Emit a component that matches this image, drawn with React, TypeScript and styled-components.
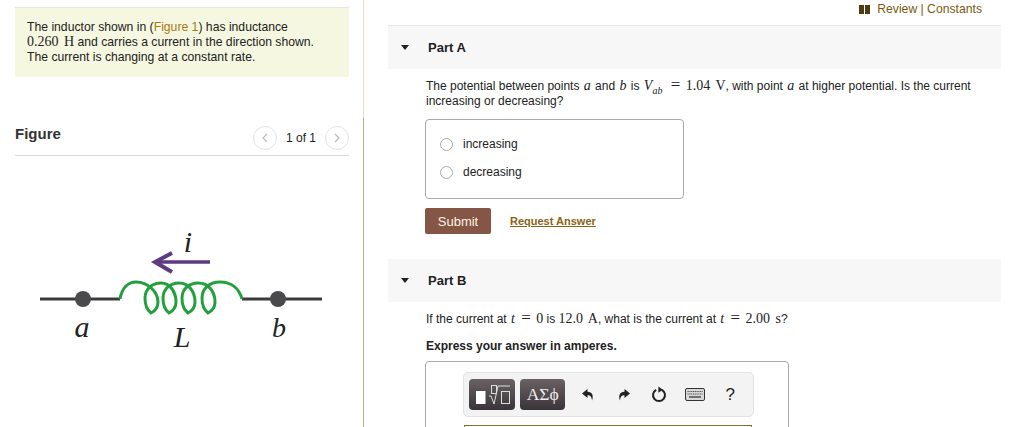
import React from 'react'
import styled, { createGlobalStyle } from 'styled-components'

const GlobalStyle = createGlobalStyle`
  html, body {
    margin: 0;
    padding: 0;
    background: #fff;
  }
  body {
    font-family: "Liberation Sans", Arial, sans-serif;
    color: #222;
    overflow: hidden;
  }
`

const Page = styled.div`
  display: flex;
  width: 1024px;
  height: 427px;
  overflow: hidden;
`

const LeftPane = styled.div`
  width: 364px;
  height: 427px;
  flex: none;
  box-sizing: border-box;
  padding: 7px 14px 0 15px;
  border-right: 1px solid #ecdccb;
  position: relative;
`

const PaneThumb = styled.div`
  position: absolute;
  top: 118px;
  right: -1px;
  bottom: 0;
  width: 1px;
  background: #c4a98a;
`

const Intro = styled.div`
  height: 70px;
  box-sizing: border-box;
  padding: 12px 0 0 12px;
  border-top: 1px solid #e6e6e0;
  background: #f6f7e0;
  font-size: 12.2px;
  line-height: 15px;
  white-space: nowrap;
`

const Accent = styled.span`
  color: #a47a14;
`

const Mathy = styled.span`
  font-family: "Liberation Serif", "Times New Roman", serif;
  font-size: 14px;
  line-height: 0;
  word-spacing: 2px;
`

const MathItalic = styled(Mathy)`
  font-style: italic;
  margin: 0 1px;
`

const Rel = styled(Mathy)`
  font-size: 17px;
  margin: 0 2px;
`

const FigureHead = styled.div`
  display: flex;
  align-items: center;
  justify-content: space-between;
  height: 27px;
  margin-top: 45px;
  padding-bottom: 6px;
  border-bottom: 1px solid #d9d9d9;
`

const FigureTitle = styled.div`
  font-size: 15px;
  font-weight: 700;
  color: #333;
  margin-bottom: 5px;
`

const Pager = styled.div`
  display: flex;
  align-items: center;
  gap: 9px;
  font-size: 12px;
  margin-top: 4px;
`

const PagerButton = styled.div`
  width: 24px;
  height: 24px;
  box-sizing: border-box;
  border: 1px solid #e4e4e4;
  border-radius: 50%;
  display: flex;
  align-items: center;
  justify-content: center;
`

const Diagram = styled.svg`
  display: block;
  width: 320px;
  height: 140px;
  margin: 64px 0 0 5px;
`

const RightPane = styled.div`
  flex: 1;
  min-width: 0;
  box-sizing: border-box;
  padding: 0 23px 0 24px;
`

const TopLinks = styled.div`
  height: 26px;
  box-sizing: border-box;
  padding: 3px 19px 0 0;
  display: flex;
  justify-content: flex-end;
  align-items: flex-start;
  gap: 7px;
  font-size: 12.2px;
  line-height: 13px;
  color: #7a5a10;
  border-bottom: 1px solid #e8e8e8;
`

const PartHeader = styled.div`
  height: 43px;
  display: flex;
  align-items: center;
  gap: 19px;
  padding-left: 13px;
  background: #f7f7f7;
  font-size: 13px;
  font-weight: 700;
  color: #222;
`

const Caret = styled.span`
  width: 0;
  height: 0;
  border-left: 4.5px solid transparent;
  border-right: 4.5px solid transparent;
  border-top: 5px solid #222;
`

const PartBody = styled.div`
  padding: 10px 0 0 37px;
`

const Question = styled.div`
  margin-left: 1px;
  font-size: 12px;
  line-height: 15px;
  white-space: nowrap;
`

const Sub = styled.sub`
  font-family: "Liberation Serif", "Times New Roman", serif;
  font-style: italic;
  font-size: 10px;
  line-height: 0;
  margin-right: 2px;
`

const ChoiceBox = styled.div`
  width: 259px;
  height: 80px;
  box-sizing: border-box;
  margin-top: 10px;
  padding: 10px 14px;
  border: 1px solid #a9a9a9;
  border-radius: 4px;
  display: flex;
  flex-direction: column;
`

const Choice = styled.label`
  display: flex;
  align-items: center;
  gap: 10px;
  height: 28px;
  font-size: 12px;
  color: #222;
`

const Radio = styled.span`
  width: 13px;
  height: 13px;
  box-sizing: border-box;
  border: 1px solid #aaa;
  border-radius: 50%;
`

const Actions = styled.div`
  display: flex;
  align-items: center;
  gap: 19px;
  margin-top: 9px;
`

const SubmitButton = styled.div`
  width: 66px;
  height: 26px;
  display: flex;
  align-items: center;
  justify-content: center;
  background: #855545;
  border-radius: 2px;
  color: #fbf3e3;
  font-size: 13px;
`

const RequestLink = styled.a`
  color: #8a6414;
  font-size: 11px;
  font-weight: 700;
  text-decoration: underline;
`

const PartSpacer = styled.div`
  height: 25px;
`

const Prompt = styled.div`
  margin: 12px 0 0 1px;
  font-size: 12px;
  font-weight: 700;
  line-height: 14px;
  color: #222;
`

const AnswerBox = styled.div`
  width: 364px;
  height: 80px;
  box-sizing: border-box;
  margin-top: 8px;
  padding: 10px 34px 0 37px;
  border: 1px solid #a9a9a9;
  border-radius: 4px;
`

const EditorBar = styled.div`
  height: 45px;
  box-sizing: border-box;
  padding: 0 5px;
  display: flex;
  align-items: center;
  background: #f3f3f3;
  border: 1px solid #e2e2e2;
  border-radius: 5px;
`

const ToolButton = styled.div`
  width: 46px;
  height: 31px;
  margin-right: 5px;
  border-radius: 4px;
  display: flex;
  align-items: center;
  justify-content: center;
  background: linear-gradient(#6a6163, #39343a);
  color: #f1eeee;
  font-family: "Liberation Serif", "Times New Roman", serif;
  font-size: 17.5px;
`

const IconSlot = styled.div`
  width: 36px;
  display: flex;
  justify-content: center;
  color: #222;
  font-size: 17px;
`

const InputEdge = styled.div`
  height: 8px;
  margin: 8px 2px 0 1px;
  border: 1px solid #8a6f33;
  border-bottom: 0;
`

const Chevron = ({ dir }: { dir: 'left' | 'right' }) => (
  <svg width="8" height="10" viewBox="0 0 8 10">
    <path d={dir === 'left' ? 'M6 1 2 5l4 4' : 'M2 1l4 4-4 4'} fill="none" stroke="#bbb" strokeWidth="1.2" />
  </svg>
)

const BookIcon = () => (
  <svg width="11" height="9" viewBox="0 0 11 9" style={{ marginTop: 2 }}>
    <path d="M0 0h5v9H0zM6 0h5v9H6z" fill="#4f3a12" />
  </svg>
)

const UndoIcon = ({ flip }: { flip?: boolean }) => (
  <svg width="14" height="14" viewBox="0 0 14 14" style={flip ? { transform: 'scaleX(-1)' } : undefined}>
    <path d="M6.5 1 1 5.6l5.5 4.4V7.2c2.6 0 4 1.2 4.6 5.3 1.6-4.8.3-8.6-4.6-8.7z" fill="#222" />
  </svg>
)

const ResetIcon = () => (
  <svg width="16" height="17" viewBox="0 0 16 17">
    <path d="M5.2 3.8A6 6 0 1 0 10.8 3.8" fill="none" stroke="#222" strokeWidth="2" />
    <path d="M7.4 0.6v6.2l4.4-3z" fill="#222" />
  </svg>
)

const KeyboardIcon = () => (
  <svg width="20" height="13" viewBox="0 0 20 13">
    <rect x="0.5" y="0.5" width="19" height="12" rx="1.5" fill="#d8d8d8" stroke="#333" />
    <path d="M2.5 3.5h15M2.5 6h15" stroke="#555" strokeWidth="1.2" strokeDasharray="1.2 .6" />
    <path d="M4 9h12" stroke="#444" strokeWidth="1.4" />
  </svg>
)

const TemplateIcon = () => (
  <svg width="46" height="31" viewBox="0 0 46 31">
    <rect x="7" y="12" width="9.5" height="13" fill="#fff" />
    <rect x="22.5" y="6.5" width="5" height="8" fill="none" stroke="#ddd" />
    <path d="M20 17h2l3 8 4-18h12" fill="none" stroke="#ddd" />
    <rect x="32.5" y="12.5" width="8" height="12" fill="none" stroke="#ddd" />
  </svg>
)

const App: React.FC = () => {
  return (
    <Page>
      <GlobalStyle />
      <LeftPane>
        <PaneThumb />
        <Intro>
          The inductor shown in (<Accent>Figure 1</Accent>) has inductance
          <br />
          <Mathy>0.260 H</Mathy> and carries a current in the direction shown.
          <br />
          The current is changing at a constant rate.
        </Intro>
        <FigureHead>
          <FigureTitle>Figure</FigureTitle>
          <Pager>
            <PagerButton>
              <Chevron dir="left" />
            </PagerButton>
            <span>1 of 1</span>
            <PagerButton>
              <Chevron dir="right" />
            </PagerButton>
          </Pager>
        </FigureHead>
        <Diagram viewBox="0 0 320 140">
          <path d="M20 79h80M222 79h80" stroke="#3a3a3c" strokeWidth="3" />
          <circle cx="63" cy="79" r="8" fill="#4a4a4c" />
          <circle cx="258" cy="79" r="8" fill="#4a4a4c" />
          <path
            d="M100 79C102 68 108 62 116 62C128 62 138 72 138 82C138 87 135 91 131 93C127 90 125 85 125 78C125 69 132 63 141 63C150 63 156 72 156 82C156 87 153 91 149 93C145 90 143 85 143 78C143 69 150 63 159 63C169 63 175 72 175 82C175 87 172 91 168 93C164 90 162 85 162 78C162 69 169 63 178 63C189 63 195 72 195 82C195 87 192 91 188 93C184 90 182 85 182 78C182 69 189 62 200 62C211 62 219 68 222 79"
            fill="none"
            stroke="#22a03c"
            strokeWidth="3"
          />
          <path d="M190 42h-54" stroke="#5e3b80" strokeWidth="3.4" />
          <path d="M152 33l-17 9 17 10" fill="none" stroke="#5e3b80" strokeWidth="4" />
          <text x="168" y="32" fontFamily="Liberation Serif" fontStyle="italic" fontSize="30" fill="#222" textAnchor="middle">i</text>
          <text x="62" y="117" fontFamily="Liberation Serif" fontStyle="italic" fontSize="30" fill="#222" textAnchor="middle">a</text>
          <text x="162" y="127" fontFamily="Liberation Serif" fontStyle="italic" fontSize="30" fill="#222" textAnchor="middle">L</text>
          <text x="259" y="117" fontFamily="Liberation Serif" fontStyle="italic" fontSize="28" fill="#222" textAnchor="middle">b</text>
        </Diagram>
      </LeftPane>
      <RightPane>
        <TopLinks>
          <BookIcon />
          <span>Review | Constants</span>
        </TopLinks>
        <PartHeader>
          <Caret />
          Part A
        </PartHeader>
        <PartBody>
          <Question>
            The potential between points <MathItalic>a</MathItalic> and <MathItalic>b</MathItalic> is{' '}
            <MathItalic>
              V<Sub>ab</Sub>
            </MathItalic>{' '}
            <Rel>=</Rel> <Mathy>1.04 V</Mathy>, with point <MathItalic>a</MathItalic> at higher potential. Is the current
            <br />
            increasing or decreasing?
          </Question>
          <ChoiceBox>
            <Choice>
              <Radio />
              increasing
            </Choice>
            <Choice>
              <Radio />
              decreasing
            </Choice>
          </ChoiceBox>
          <Actions>
            <SubmitButton>Submit</SubmitButton>
            <RequestLink>Request Answer</RequestLink>
          </Actions>
        </PartBody>
        <PartSpacer />
        <PartHeader>
          <Caret />
          Part B
        </PartHeader>
        <PartBody>
          <Question>
            If the current at <MathItalic>t</MathItalic> <Rel>=</Rel> <Mathy>0</Mathy> is <Mathy>12.0 A</Mathy>, what is the
            current at <MathItalic>t</MathItalic> <Rel>=</Rel> <Mathy>2.00 s</Mathy>?
          </Question>
          <Prompt>Express your answer in amperes.</Prompt>
          <AnswerBox>
            <EditorBar>
              <ToolButton>
                <TemplateIcon />
              </ToolButton>
              <ToolButton>ΑΣϕ</ToolButton>
              <IconSlot>
                <UndoIcon />
              </IconSlot>
              <IconSlot>
                <UndoIcon flip />
              </IconSlot>
              <IconSlot>
                <ResetIcon />
              </IconSlot>
              <IconSlot>
                <KeyboardIcon />
              </IconSlot>
              <IconSlot>?</IconSlot>
            </EditorBar>
            <InputEdge />
          </AnswerBox>
        </PartBody>
      </RightPane>
    </Page>
  )
}

export default App
